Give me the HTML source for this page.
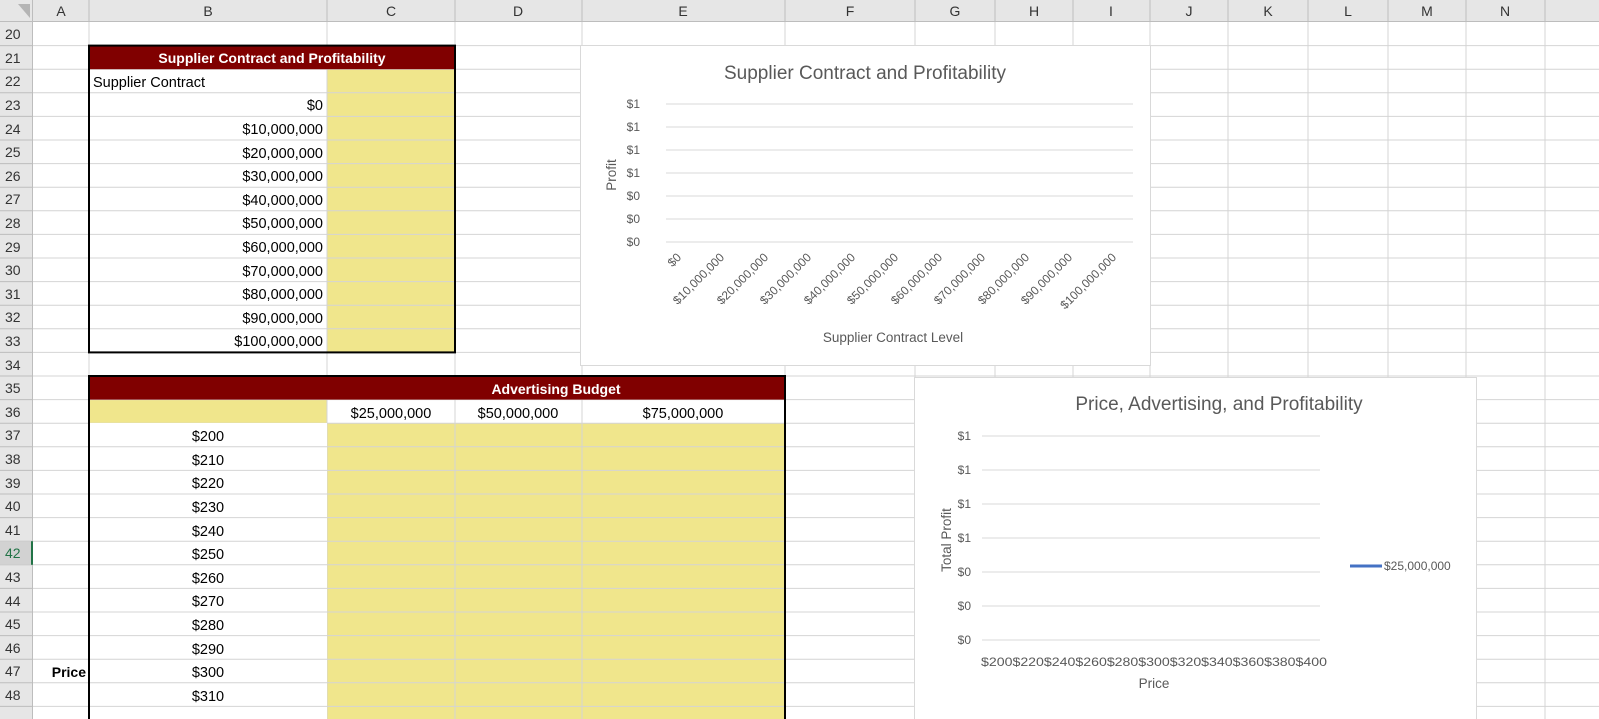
<!DOCTYPE html>
<html><head><meta charset="utf-8"><style>
html,body{margin:0;padding:0;background:#fff;width:1599px;height:719px;overflow:hidden}
svg{display:block;font-family:"Liberation Sans",Arial,sans-serif}
</style></head><body>
<svg width="1599" height="719" viewBox="0 0 1599 719" xmlns="http://www.w3.org/2000/svg">
<rect x="0" y="0" width="1599" height="719" fill="#fff"/>
<!-- table fills -->
<rect x="89" y="45.6" width="366" height="306.8" fill="#fff"/>
<rect x="89" y="45.6" width="366" height="23.6" fill="#800000"/>
<rect x="327" y="69.2" width="128" height="283.2" fill="#f0e68c"/>
<rect x="89" y="376" width="696" height="23.6" fill="#800000"/>
<rect x="89" y="399.6" width="238" height="23.6" fill="#f0e68c"/>
<rect x="327" y="423.2" width="458" height="296" fill="#f0e68c"/>
<!-- gridlines -->
<g stroke="#d4d4d4" stroke-width="1">
<line x1="33" y1="45.6" x2="1599" y2="45.6"/><line x1="33" y1="69.2" x2="1599" y2="69.2"/><line x1="33" y1="92.8" x2="1599" y2="92.8"/><line x1="33" y1="116.4" x2="1599" y2="116.4"/><line x1="33" y1="140" x2="1599" y2="140"/><line x1="33" y1="163.6" x2="1599" y2="163.6"/><line x1="33" y1="187.2" x2="1599" y2="187.2"/><line x1="33" y1="210.8" x2="1599" y2="210.8"/><line x1="33" y1="234.4" x2="1599" y2="234.4"/><line x1="33" y1="258" x2="1599" y2="258"/><line x1="33" y1="281.6" x2="1599" y2="281.6"/><line x1="33" y1="305.2" x2="1599" y2="305.2"/><line x1="33" y1="328.8" x2="1599" y2="328.8"/><line x1="33" y1="352.4" x2="1599" y2="352.4"/><line x1="33" y1="376" x2="1599" y2="376"/><line x1="33" y1="399.6" x2="1599" y2="399.6"/><line x1="33" y1="423.2" x2="1599" y2="423.2"/><line x1="33" y1="446.8" x2="1599" y2="446.8"/><line x1="33" y1="470.4" x2="1599" y2="470.4"/><line x1="33" y1="494" x2="1599" y2="494"/><line x1="33" y1="517.6" x2="1599" y2="517.6"/><line x1="33" y1="541.2" x2="1599" y2="541.2"/><line x1="33" y1="564.8" x2="1599" y2="564.8"/><line x1="33" y1="588.4" x2="1599" y2="588.4"/><line x1="33" y1="612" x2="1599" y2="612"/><line x1="33" y1="635.6" x2="1599" y2="635.6"/><line x1="33" y1="659.2" x2="1599" y2="659.2"/><line x1="33" y1="682.8" x2="1599" y2="682.8"/><line x1="33" y1="706.4" x2="1599" y2="706.4"/>
<line x1="89" y1="22" x2="89" y2="719"/><line x1="327" y1="22" x2="327" y2="719"/><line x1="455" y1="22" x2="455" y2="719"/><line x1="582" y1="22" x2="582" y2="719"/><line x1="785" y1="22" x2="785" y2="719"/><line x1="915" y1="22" x2="915" y2="719"/><line x1="995" y1="22" x2="995" y2="719"/><line x1="1073" y1="22" x2="1073" y2="719"/><line x1="1150" y1="22" x2="1150" y2="719"/><line x1="1228" y1="22" x2="1228" y2="719"/><line x1="1308" y1="22" x2="1308" y2="719"/><line x1="1388" y1="22" x2="1388" y2="719"/><line x1="1466" y1="22" x2="1466" y2="719"/><line x1="1545" y1="22" x2="1545" y2="719"/>
</g>
<!-- maroon header rows cover gridlines -->
<rect x="89" y="45.6" width="366" height="23.6" fill="#800000"/>
<rect x="89" y="376" width="696" height="23.6" fill="#800000"/>
<rect x="89" y="423" width="238" height="296" fill="#fff"/>
<g stroke="#d4d4d4"><line x1="89" y1="446.8" x2="327" y2="446.8"/><line x1="89" y1="470.4" x2="327" y2="470.4"/><line x1="89" y1="494" x2="327" y2="494"/><line x1="89" y1="517.6" x2="327" y2="517.6"/><line x1="89" y1="541.2" x2="327" y2="541.2"/><line x1="89" y1="564.8" x2="327" y2="564.8"/><line x1="89" y1="588.4" x2="327" y2="588.4"/><line x1="89" y1="612" x2="327" y2="612"/><line x1="89" y1="635.6" x2="327" y2="635.6"/><line x1="89" y1="659.2" x2="327" y2="659.2"/><line x1="89" y1="682.8" x2="327" y2="682.8"/><line x1="89" y1="706.4" x2="327" y2="706.4"/></g>
<!-- borders -->
<rect x="89" y="45.6" width="366" height="306.8" fill="none" stroke="#000" stroke-width="2"/>
<path d="M89 719 V376 H785 V719" fill="none" stroke="#000" stroke-width="2"/>
<!-- headers -->
<rect x="0" y="0" width="1599" height="22" fill="#e6e6e6"/>
<rect x="0" y="22" width="33" height="697" fill="#e6e6e6"/>
<g stroke="#bdbdbd"><line x1="0" y1="21.5" x2="1599" y2="21.5"/><line x1="32.5" y1="0" x2="32.5" y2="719"/>
<line x1="89" y1="0" x2="89" y2="22"/><line x1="327" y1="0" x2="327" y2="22"/><line x1="455" y1="0" x2="455" y2="22"/><line x1="582" y1="0" x2="582" y2="22"/><line x1="785" y1="0" x2="785" y2="22"/><line x1="915" y1="0" x2="915" y2="22"/><line x1="995" y1="0" x2="995" y2="22"/><line x1="1073" y1="0" x2="1073" y2="22"/><line x1="1150" y1="0" x2="1150" y2="22"/><line x1="1228" y1="0" x2="1228" y2="22"/><line x1="1308" y1="0" x2="1308" y2="22"/><line x1="1388" y1="0" x2="1388" y2="22"/><line x1="1466" y1="0" x2="1466" y2="22"/><line x1="1545" y1="0" x2="1545" y2="22"/>
<line x1="0" y1="45.6" x2="33" y2="45.6"/><line x1="0" y1="69.2" x2="33" y2="69.2"/><line x1="0" y1="92.8" x2="33" y2="92.8"/><line x1="0" y1="116.4" x2="33" y2="116.4"/><line x1="0" y1="140" x2="33" y2="140"/><line x1="0" y1="163.6" x2="33" y2="163.6"/><line x1="0" y1="187.2" x2="33" y2="187.2"/><line x1="0" y1="210.8" x2="33" y2="210.8"/><line x1="0" y1="234.4" x2="33" y2="234.4"/><line x1="0" y1="258" x2="33" y2="258"/><line x1="0" y1="281.6" x2="33" y2="281.6"/><line x1="0" y1="305.2" x2="33" y2="305.2"/><line x1="0" y1="328.8" x2="33" y2="328.8"/><line x1="0" y1="352.4" x2="33" y2="352.4"/><line x1="0" y1="376" x2="33" y2="376"/><line x1="0" y1="399.6" x2="33" y2="399.6"/><line x1="0" y1="423.2" x2="33" y2="423.2"/><line x1="0" y1="446.8" x2="33" y2="446.8"/><line x1="0" y1="470.4" x2="33" y2="470.4"/><line x1="0" y1="494" x2="33" y2="494"/><line x1="0" y1="517.6" x2="33" y2="517.6"/><line x1="0" y1="541.2" x2="33" y2="541.2"/><line x1="0" y1="564.8" x2="33" y2="564.8"/><line x1="0" y1="588.4" x2="33" y2="588.4"/><line x1="0" y1="612" x2="33" y2="612"/><line x1="0" y1="635.6" x2="33" y2="635.6"/><line x1="0" y1="659.2" x2="33" y2="659.2"/><line x1="0" y1="682.8" x2="33" y2="682.8"/><line x1="0" y1="706.4" x2="33" y2="706.4"/></g>
<rect x="0" y="541.2" width="33" height="23.6" fill="#d2d2d2"/>
<line x1="32" y1="541.2" x2="32" y2="564.8" stroke="#217346" stroke-width="2"/>
<polygon points="18,4 30,4 30,18" fill="#b4b4b4"/>
<g font-size="14" fill="#333" text-anchor="middle">
<text x="61" y="16">A</text><text x="208" y="16">B</text><text x="391" y="16">C</text><text x="518" y="16">D</text><text x="683" y="16">E</text><text x="850" y="16">F</text><text x="955" y="16">G</text><text x="1034" y="16">H</text><text x="1111" y="16">I</text><text x="1189" y="16">J</text><text x="1268" y="16">K</text><text x="1348" y="16">L</text><text x="1427" y="16">M</text><text x="1505" y="16">N</text>
</g>
<g font-size="14" fill="#333">
<text x="5" y="39">20</text><text x="5" y="63">21</text><text x="5" y="86">22</text><text x="5" y="110">23</text><text x="5" y="134">24</text><text x="5" y="157">25</text><text x="5" y="181">26</text><text x="5" y="204">27</text><text x="5" y="228">28</text><text x="5" y="252">29</text><text x="5" y="275">30</text><text x="5" y="299">31</text><text x="5" y="322">32</text><text x="5" y="346">33</text><text x="5" y="370">34</text><text x="5" y="393">35</text><text x="5" y="417">36</text><text x="5" y="440">37</text><text x="5" y="464">38</text><text x="5" y="488">39</text><text x="5" y="511">40</text><text x="5" y="535">41</text><text x="5" y="558" fill="#217346">42</text><text x="5" y="582">43</text><text x="5" y="606">44</text><text x="5" y="629">45</text><text x="5" y="653">46</text><text x="5" y="676">47</text><text x="5" y="700">48</text>
</g>
<!-- table1 text -->
<g font-size="14.5" fill="#000">
<text x="272" y="63" text-anchor="middle" fill="#fff" font-weight="bold" font-size="14">Supplier Contract and Profitability</text>
<text x="93" y="87">Supplier Contract</text>
<g text-anchor="end"><text x="323" y="110">$0</text><text x="323" y="134">$10,000,000</text><text x="323" y="158">$20,000,000</text><text x="323" y="181">$30,000,000</text><text x="323" y="205">$40,000,000</text><text x="323" y="228">$50,000,000</text><text x="323" y="252">$60,000,000</text><text x="323" y="276">$70,000,000</text><text x="323" y="299">$80,000,000</text><text x="323" y="323">$90,000,000</text><text x="323" y="346">$100,000,000</text></g>
<text x="556" y="394" text-anchor="middle" fill="#fff" font-weight="bold" font-size="14">Advertising Budget</text>
<g text-anchor="middle"><text x="391" y="418">$25,000,000</text><text x="518" y="418">$50,000,000</text><text x="683" y="418">$75,000,000</text>
<text x="208" y="441">$200</text><text x="208" y="465">$210</text><text x="208" y="488">$220</text><text x="208" y="512">$230</text><text x="208" y="536">$240</text><text x="208" y="559">$250</text><text x="208" y="583">$260</text><text x="208" y="606">$270</text><text x="208" y="630">$280</text><text x="208" y="654">$290</text><text x="208" y="677">$300</text><text x="208" y="701">$310</text></g>
<text x="86" y="677" text-anchor="end" font-weight="bold" font-size="14">Price</text>
</g>
<!-- chart 1 -->
<rect x="580.5" y="45.5" width="570" height="320" fill="#fff" stroke="#d9d9d9"/>
<text x="865" y="79" text-anchor="middle" font-size="19" fill="#595959">Supplier Contract and Profitability</text>
<g stroke="#d9d9d9"><line x1="666" y1="104" x2="1133" y2="104"/><line x1="666" y1="127" x2="1133" y2="127"/><line x1="666" y1="150" x2="1133" y2="150"/><line x1="666" y1="173" x2="1133" y2="173"/><line x1="666" y1="196" x2="1133" y2="196"/><line x1="666" y1="219" x2="1133" y2="219"/><line x1="666" y1="242" x2="1133" y2="242"/></g>
<g font-size="12" fill="#595959" text-anchor="end"><text x="640" y="108">$1</text><text x="640" y="131">$1</text><text x="640" y="154">$1</text><text x="640" y="177">$1</text><text x="640" y="200">$0</text><text x="640" y="223">$0</text><text x="640" y="246">$0</text>
<text transform="translate(682,258) rotate(-45)">$0</text><text transform="translate(725,258) rotate(-45)">$10,000,000</text><text transform="translate(769,258) rotate(-45)">$20,000,000</text><text transform="translate(812,258) rotate(-45)">$30,000,000</text><text transform="translate(856,258) rotate(-45)">$40,000,000</text><text transform="translate(899,258) rotate(-45)">$50,000,000</text><text transform="translate(943,258) rotate(-45)">$60,000,000</text><text transform="translate(986,258) rotate(-45)">$70,000,000</text><text transform="translate(1030,258) rotate(-45)">$80,000,000</text><text transform="translate(1073,258) rotate(-45)">$90,000,000</text><text transform="translate(1117,258) rotate(-45)">$100,000,000</text></g>
<text transform="translate(616,175) rotate(-90)" text-anchor="middle" font-size="13.5" fill="#595959">Profit</text>
<text x="893" y="342" text-anchor="middle" font-size="13.5" fill="#595959">Supplier Contract Level</text>
<!-- chart 2 -->
<rect x="914.5" y="377.5" width="562" height="345" fill="#fff" stroke="#d9d9d9"/>
<text x="1219" y="410" text-anchor="middle" font-size="19" fill="#595959">Price, Advertising, and Profitability</text>
<g stroke="#d9d9d9"><line x1="982" y1="436" x2="1320" y2="436"/><line x1="982" y1="470" x2="1320" y2="470"/><line x1="982" y1="504" x2="1320" y2="504"/><line x1="982" y1="538" x2="1320" y2="538"/><line x1="982" y1="572" x2="1320" y2="572"/><line x1="982" y1="606" x2="1320" y2="606"/><line x1="982" y1="640" x2="1320" y2="640"/></g>
<g font-size="12" fill="#595959" text-anchor="end"><text x="971" y="440">$1</text><text x="971" y="474">$1</text><text x="971" y="508">$1</text><text x="971" y="542">$1</text><text x="971" y="576">$0</text><text x="971" y="610">$0</text><text x="971" y="644">$0</text></g>
<text x="981" y="666" font-size="12" fill="#595959" textLength="346" lengthAdjust="spacingAndGlyphs">$200$220$240$260$280$300$320$340$360$380$400</text>
<text x="1154" y="688" text-anchor="middle" font-size="13.5" fill="#595959">Price</text>
<text transform="translate(951,540) rotate(-90)" text-anchor="middle" font-size="13.5" fill="#595959">Total Profit</text>
<line x1="1350" y1="566" x2="1382" y2="566" stroke="#4472c4" stroke-width="3"/>
<text x="1384" y="570" font-size="12" fill="#595959">$25,000,000</text>
</svg>
</body></html>
